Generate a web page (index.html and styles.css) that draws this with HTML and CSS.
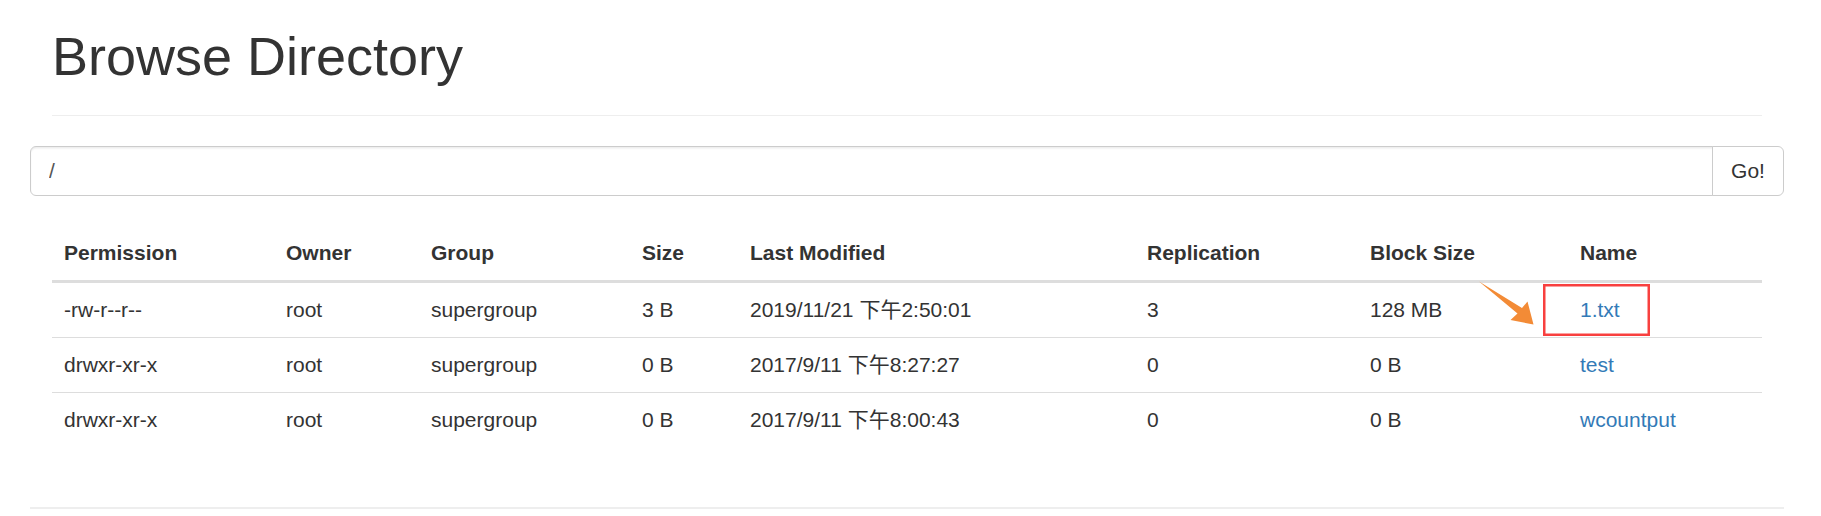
FILE: index.html
```html
<!DOCTYPE html>
<html lang="zh-CN">
<head>
<meta charset="utf-8">
<title>Browsing HDFS</title>
<link rel="stylesheet" href="styles.css">
</head>
<body>
<div class="container">
  <div class="page-header">
    <h1>Browse Directory</h1>
  </div>
  <div class="row">
    <div class="input-group">
      <input class="form-control" type="text" value="/">
      <button class="btn" type="button">Go!</button>
    </div>
  </div>
  <div class="listing">
    <table class="table">
      <colgroup>
        <col class="c-perm"><col class="c-owner"><col class="c-group"><col class="c-size">
        <col class="c-mod"><col class="c-rep"><col class="c-block"><col class="c-name">
      </colgroup>
      <thead>
        <tr>
          <th>Permission</th><th>Owner</th><th>Group</th><th>Size</th>
          <th>Last Modified</th><th>Replication</th><th>Block Size</th><th>Name</th>
        </tr>
      </thead>
      <tbody>
        <tr>
          <td>-rw-r--r--</td><td>root</td><td>supergroup</td><td>3 B</td>
          <td>2019/11/21 下午2:50:01</td><td>3</td><td>128 MB</td><td><a href="#">1.txt</a></td>
        </tr>
        <tr>
          <td>drwxr-xr-x</td><td>root</td><td>supergroup</td><td>0 B</td>
          <td>2017/9/11 下午8:27:27</td><td>0</td><td>0 B</td><td><a href="#">test</a></td>
        </tr>
        <tr>
          <td>drwxr-xr-x</td><td>root</td><td>supergroup</td><td>0 B</td>
          <td>2017/9/11 下午8:00:43</td><td>0</td><td>0 B</td><td><a href="#">wcountput</a></td>
        </tr>
      </tbody>
    </table>
    <svg class="annotation" width="190" height="70" viewBox="0 0 190 70" aria-hidden="true">
      <polygon points="9,7.5 52,34 57.5,27.5 63.5,50.5 40.5,46 47.5,39.5" fill="#f38b36"/>
      <rect x="74.25" y="11.25" width="104.5" height="49.5" fill="none" stroke="#f8403f" stroke-width="2.5"/>
    </svg>
  </div>
  <div class="row">
    <hr class="footer-rule">
  </div>
</div>
</body>
</html>
```
FILE: styles.css
```css
* {
  box-sizing: border-box;
}

body {
  margin: 0;
  font-family: "Liberation Sans", Arial, "Noto Sans CJK SC", sans-serif;
  font-size: 21px;
  line-height: 30px;
  color: #333;
  background: #fff;
}

.container {
  width: 1710px;
  margin-left: 52px;
}

.page-header {
  margin-top: 27px;
  padding-bottom: 13.5px;
  border-bottom: 1.5px solid #eee;
  margin-bottom: 30.5px;
}

.page-header h1 {
  margin: 0 0 15px;
  font-size: 54px;
  line-height: 59.4px;
  font-weight: normal;
  color: #333;
}

.row {
  margin: 0 -22px;
}

.input-group {
  display: flex;
  height: 50px;
}

.form-control {
  flex: 1;
  min-width: 0;
  height: 50px;
  padding: 9px 18px;
  font: inherit;
  color: #555;
  background: #fff;
  border: 1.5px solid #ccc;
  border-radius: 6px 0 0 6px;
  box-shadow: inset 0 1.5px 1.5px rgba(0, 0, 0, 0.075);
  outline: none;
}

.btn {
  margin-left: -1.5px;
  width: 72px;
  height: 50px;
  padding: 9px 0;
  font: inherit;
  color: #333;
  background: #fff;
  border: 1.5px solid #ccc;
  border-radius: 0 6px 6px 0;
}

.listing {
  position: relative;
  margin-top: 30px;
}

.table {
  width: 100%;
  border-collapse: collapse;
  table-layout: fixed;
  margin: 0;
}

.c-perm { width: 222px; }
.c-owner { width: 145px; }
.c-group { width: 211px; }
.c-size { width: 108px; }
.c-mod { width: 397px; }
.c-rep { width: 223px; }
.c-block { width: 210px; }
.c-name { width: 194px; }

.table th,
.table td {
  padding: 12px;
  text-align: left;
  line-height: 30px;
  white-space: nowrap;
}

.table th {
  font-weight: bold;
  border-bottom: 3px solid #ddd;
}

.table td {
  border-top: 1.5px solid #ddd;
}

.table a {
  color: #337ab7;
  text-decoration: none;
}

.annotation {
  position: absolute;
  left: 1418px;
  top: 48px;
}

.footer-rule {
  margin: 60px 0 0;
  border: 0;
  border-top: 2px solid #eee;
  height: 0;
}
```
